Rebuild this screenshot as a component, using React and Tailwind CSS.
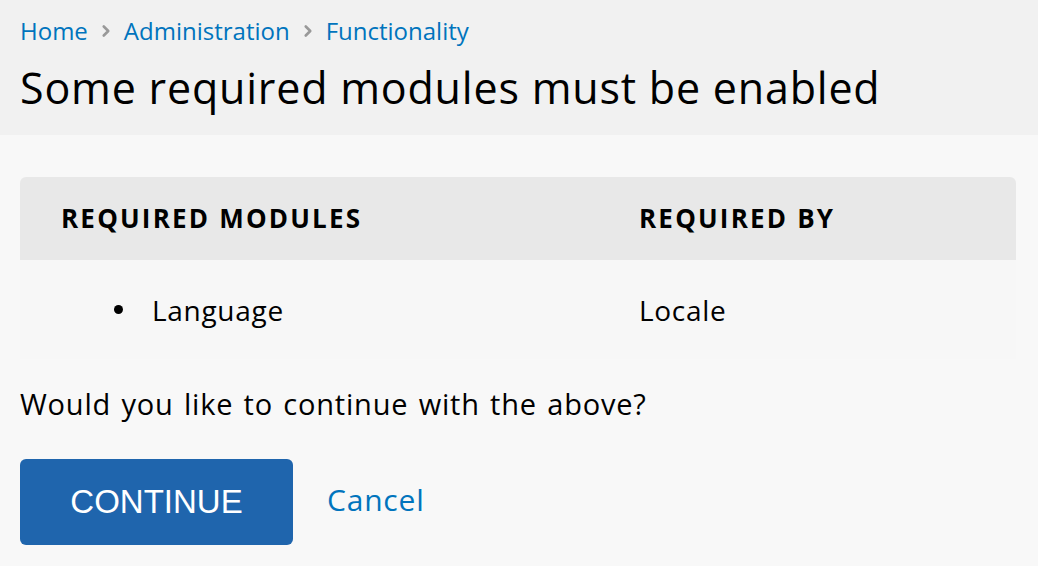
import { ChevronRight } from "lucide-react";

function Crumb({ children }) {
  return <a href="#" className="text-[#0074bd] hover:underline">{children}</a>;
}

export default function App() {
  return (
    <div className="min-h-screen bg-[#f8f8f8] font-['Open_Sans',sans-serif] text-black">
      <header className="bg-[#f1f1f1] px-5 pt-[14px] pb-[19px]">
        <nav className="flex items-center gap-[9px] text-[24px] leading-[34px]">
          <Crumb>Home</Crumb>
          <ChevronRight size={18} strokeWidth={3.5} className="text-[#999999]" />
          <Crumb>Administration</Crumb>
          <ChevronRight size={18} strokeWidth={3.5} className="text-[#999999]" />
          <Crumb>Functionality</Crumb>
        </nav>
        <h1 className="mt-[12px] text-[43px] leading-[56px] font-normal tracking-[0.8px]">
          Some required modules must be enabled
        </h1>
      </header>

      <main className="px-5 pt-[42px]">
        <table className="w-[996px] border-collapse">
          <thead>
            <tr className="bg-[#e8e8e8]">
              <th className="h-[83px] w-[578px] rounded-tl-[6px] pl-[41px] text-left text-[26px] font-bold uppercase tracking-[2.2px]">
                Required modules
              </th>
              <th className="h-[83px] rounded-tr-[6px] pl-[41px] text-left text-[26px] font-bold uppercase tracking-[2.2px]">
                Required by
              </th>
            </tr>
          </thead>
          <tbody>
            <tr className="bg-[#f7f7f7]">
              <td className="h-[99px] pl-[41px] text-[28px] tracking-[0.7px]">
                <ul className="pl-[53px]">
                  <li className="flex items-center gap-[29px]">
                    <span className="h-[9px] w-[9px] rounded-full bg-black" />
                    Language
                  </li>
                </ul>
              </td>
              <td className="h-[99px] pl-[41px] text-[28px] tracking-[0.7px]">Locale</td>
            </tr>
          </tbody>
        </table>

        <p className="mt-[27px] text-[29px] leading-[36px] tracking-[0.8px] [word-spacing:2px]">
          Would you like to continue with the above?
        </p>

        <div className="mt-[37px] flex items-center gap-[34px]">
          <button className="h-[86px] w-[273px] rounded-[6px] bg-[#1f65ad] font-['Liberation_Sans',sans-serif] text-[33px] text-white">
            CONTINUE
          </button>
          <a href="#" className="-mt-[5px] text-[30px] tracking-[0.8px] text-[#0074bd]">Cancel</a>
        </div>
      </main>
    </div>
  );
}
